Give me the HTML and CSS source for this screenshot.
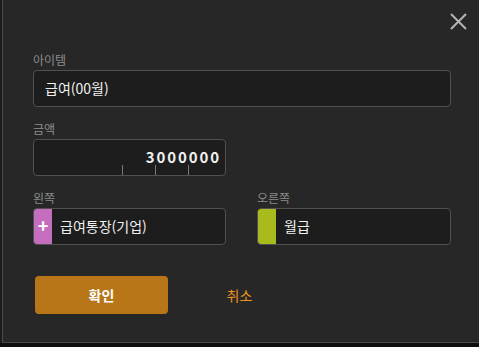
FILE: index.html
```html
<!DOCTYPE html>
<html lang="ko">
  <head>
    <meta charset="UTF-8" />
    <meta name="viewport" content="width=device-width, initial-scale=1.0" />
    <title>항목 편집</title>
    <link rel="stylesheet" href="styles.css">
  </head>
  <body>
    <div class="dialog">
      <div class="dialog-head">
        <button class="close" aria-label="닫기">
          <svg width="17" height="17" viewBox="0 0 17 17">
            <path d="M1 1 L16 16 M16 1 L1 16" stroke="#b4b4b4" stroke-width="2" fill="none" />
          </svg>
        </button>
      </div>
      <form class="form">
        <div class="field">
          <label class="label">아이템</label>
          <div class="input">급여(00월)</div>
        </div>
        <div class="field">
          <label class="label">금액</label>
          <div class="input amount">
            <span class="amount-value">3000000</span>
            <div class="ticks">
              <span></span><span></span><span></span>
            </div>
          </div>
        </div>
        <div class="pair">
          <div class="field">
            <label class="label">왼쪽</label>
            <div class="input account">
              <span class="swatch pink">+</span>
              <span class="account-name">급여통장(기업)</span>
            </div>
          </div>
          <div class="field">
            <label class="label">오른쪽</label>
            <div class="input account">
              <span class="swatch lime"></span>
              <span class="account-name">월급</span>
            </div>
          </div>
        </div>
        <div class="actions">
          <button type="button" class="btn primary">확인</button>
          <button type="button" class="btn cancel">취소</button>
        </div>
      </form>
    </div>
  </body>
</html>
```

FILE: styles.css
```css
html,
body {
  margin: 0;
  padding: 0;
  height: 347px;
  overflow: hidden;
}
body {
  font-family: "Noto Sans CJK KR", "Noto Sans", sans-serif;
  background-color: #0e0e0e;
  color: #eee;
}
.dialog {
  box-sizing: border-box;
  width: 479px;
  height: 343px;
  background-color: #272727;
  box-shadow: inset 2px 0 0 #1c1c1c;
}
.dialog-head {
  display: flex;
  justify-content: flex-end;
  height: 51px;
  box-sizing: border-box;
  padding: 13px 12px 0 0;
  margin-left: 2px;
  border-left: 1px solid #4a4a4a;
}
.close {
  background: none;
  border: none;
  padding: 0;
  width: 17px;
  height: 17px;
  cursor: pointer;
}
.form {
  margin: 0 0 0 2px;
  height: 292px;
  box-sizing: border-box;
  border-left: 1px solid #4a4a4a;
  border-bottom: 1px solid #4a4a4a;
  padding: 0 0 0 30px;
  display: flex;
  flex-direction: column;
}
.field {
  display: flex;
  flex-direction: column;
}
.field + .field,
.pair {
  margin-top: 13px;
}
.pair .field {
  margin-top: 0;
}
.label {
  font-size: 12px;
  line-height: 18px;
  color: #8c8c8c;
  margin-bottom: 1px;
}
.input {
  box-sizing: border-box;
  width: 418px;
  height: 37px;
  background-color: #1d1d1d;
  border: 1px solid #505050;
  border-radius: 4px;
  padding: 0 11px;
  font-size: 14px;
  line-height: 35px;
  color: #f0f0f0;
  overflow: hidden;
}
.amount {
  width: 193px;
  position: relative;
  text-align: right;
  padding-right: 4px;
}
.amount-value {
  font-weight: bold;
  font-size: 15px;
  letter-spacing: 1.9px;
  line-height: 33px;
}
.ticks {
  position: absolute;
  right: 36px;
  bottom: 0;
  display: flex;
  gap: 32px;
}
.ticks span {
  width: 1px;
  height: 10px;
  background-color: #7a7a7a;
}
.pair {
  display: grid;
  grid-template-columns: 193px 194px;
  column-gap: 31px;
}
.account {
  width: auto;
  display: flex;
  align-items: stretch;
  padding: 0;
}
.swatch {
  width: 18px;
  flex: none;
  color: #fff;
  font-weight: bold;
  font-size: 18px;
  text-align: center;
  line-height: 33px;
}
.pink {
  background-color: #c56ec0;
}
.lime {
  background-color: #a9ba1c;
}
.account-name {
  padding-left: 8px;
}
.actions {
  display: flex;
  gap: 5px;
  margin-top: 31px;
  padding-left: 2px;
}
.btn {
  width: 133px;
  height: 38px;
  border: none;
  border-radius: 4px;
  font-family: inherit;
  font-size: 14px;
  cursor: pointer;
}
.primary {
  background-color: #b87619;
  color: #fff;
  font-weight: bold;
}
.cancel {
  background: none;
  color: #ec931e;
}
```
